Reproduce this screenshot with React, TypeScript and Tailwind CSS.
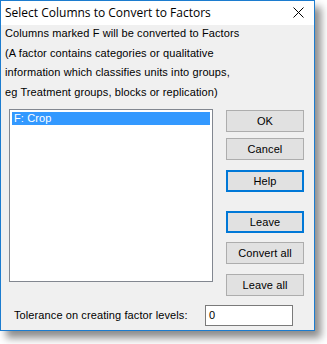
import React from "react";

const font = { fontFamily: '"Liberation Sans", Arial, sans-serif' };

function Btn({ label, focus, className }: { label: string; focus?: boolean; className?: string }) {
  return (
    <div
      className={
        "w-[78px] h-[22px] flex items-center justify-center bg-[#e1e1e1] text-[11px] tracking-[0.1px] text-black " +
        (focus ? "border-2 border-[#0078d7] " : "border border-[#adadad] ") +
        (className || "")
      }
    >
      {label}
    </div>
  );
}

export default function App() {
  return (
    <div className="w-[327px] h-[344px] bg-white" style={font}>
      <div className="w-[315px] h-[331px] border border-[#1c7ccf] bg-[#f0f0f0] flex flex-col shadow-[6px_7px_8px_rgba(0,0,0,0.45)]">
        <div className="h-[24px] bg-white flex items-center justify-between pl-[4px] pr-[10px]">
          <span className="text-[12px] text-black" style={{ fontFamily: '"Open Sans", "Noto Sans", sans-serif' }}>
            Select Columns to Convert to Factors
          </span>
          <svg width="11" height="11" viewBox="0 0 11 11" className="mb-[1px]">
            <path d="M0.5 0.5 L10.5 10.5 M10.5 0.5 L0.5 10.5" stroke="#000" strokeWidth="1" />
          </svg>
        </div>
        <div className="pl-[4px] text-[11px] tracking-[0.1px] leading-[19.5px] text-black mt-[-1px]">
          <div>Columns marked F will be converted to Factors</div>
          <div>(A factor contains categories or qualitative</div>
          <div>information which classifies units into groups,</div>
          <div>eg Treatment groups, blocks or replication)</div>
        </div>
        <div className="flex mt-[7px] pl-[8px]">
          <div className="w-[204px] h-[173px] border border-[#828790] bg-white p-[2px]">
            <div className="h-[13px] bg-[#3399ff] text-white text-[11px] tracking-[0.1px] leading-[13px] pl-[2px]">F: Crop</div>
          </div>
          <div className="flex flex-col ml-[13px] mt-[1px]">
            <Btn label="OK" />
            <Btn label="Cancel" className="mt-[6px]" />
            <Btn label="Help" focus className="mt-[10px]" />
            <Btn label="Leave" focus className="mt-[19px]" />
            <Btn label="Convert all" className="mt-[9px]" />
            <Btn label="Leave all" className="mt-[10px]" />
          </div>
        </div>
        <div className="flex items-center mt-[9px] pl-[13px]">
          <span className="text-[11px] tracking-[0.1px] text-black w-[191px]">Tolerance on creating factor levels:</span>
          <div className="w-[88px] h-[21px] border border-[#7a7a7a] bg-white text-[11px] flex items-center pl-[3px]">0</div>
        </div>
      </div>
    </div>
  );
}
